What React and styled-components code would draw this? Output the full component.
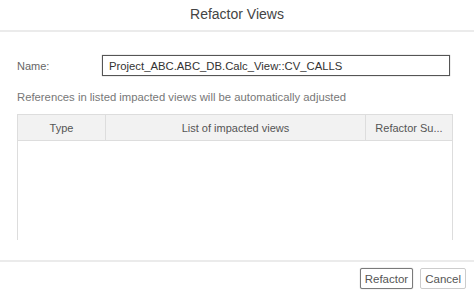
import React from "react"
import styled, { createGlobalStyle } from "styled-components"

const GlobalStyle = createGlobalStyle`
  html, body {
    margin: 0;
    padding: 0;
    background: #ffffff;
    font-family: "Liberation Sans", Arial, sans-serif;
  }
  * {
    box-sizing: border-box;
  }
`

const Dialog = styled.div`
  display: flex;
  flex-direction: column;
  width: 474px;
  height: 293px;
  background: #ffffff;
  overflow: hidden;
`

const Header = styled.div`
  height: 32px;
  display: flex;
  align-items: center;
  justify-content: center;
  border-bottom: 2px solid #ebebeb;
  color: #444444;
  font-size: 14px;
  padding-bottom: 2px;
`

const Content = styled.div`
  flex: 1;
  padding: 23px 21px 0 17px;
  display: flex;
  flex-direction: column;
`

const NameRow = styled.div`
  display: flex;
  align-items: center;
  padding-right: 3px;
`

const Label = styled.div`
  width: 85px;
  color: #666666;
  font-size: 11px;
`

const Input = styled.div`
  flex: 1;
  height: 21px;
  border: 1px solid #555555;
  box-shadow: 0 0 1px #999999;
  padding: 0 6px;
  display: flex;
  align-items: center;
  color: #333333;
  font-size: 11.3px;
`

const Hint = styled.div`
  margin-top: 14px;
  color: #777777;
  font-size: 11.3px;
  line-height: 14px;
`

const Table = styled.div`
  margin-top: 10px;
  height: 126px;
  border: 1px solid #dddddd;
  border-bottom: none;
  display: flex;
  flex-direction: column;
`

const HeadRow = styled.div`
  display: grid;
  grid-template-columns: 87px 260px 1fr;
  height: 26px;
  background: #f2f2f2;
  border-bottom: 1px solid #dddddd;
`

const HeadCell = styled.div`
  display: flex;
  align-items: center;
  justify-content: center;
  color: #555555;
  font-size: 11px;
  white-space: nowrap;
  overflow: hidden;
  border-left: ${(p) => (p.$first ? "none" : "1px solid #dddddd")};
`

const Footer = styled.div`
  height: 33px;
  border-top: 2px solid #ebebeb;
  display: flex;
  align-items: center;
  justify-content: flex-end;
  gap: 7px;
  padding: 2px 8px 0 0;
`

const Button = styled.button`
  height: 21px;
  padding: 0 4px;
  background: #ffffff;
  border: 1px solid ${(p) => (p.$focused ? "#7a7a7a" : "#cccccc")};
  box-shadow: ${(p) => (p.$focused ? "0 0 1px #888888" : "none")};
  border-radius: 2px;
  color: #555555;
  font-family: "Liberation Sans", Arial, sans-serif;
  font-size: 11.5px;
`

const App = () => {
  return (
    <Dialog>
      <GlobalStyle />
      <Header>Refactor Views</Header>
      <Content>
        <NameRow>
          <Label>Name:</Label>
          <Input>Project_ABC.ABC_DB.Calc_View::CV_CALLS</Input>
        </NameRow>
        <Hint>References in listed impacted views will be automatically adjusted</Hint>
        <Table>
          <HeadRow>
            <HeadCell $first>Type</HeadCell>
            <HeadCell>List of impacted views</HeadCell>
            <HeadCell>Refactor Su...</HeadCell>
          </HeadRow>
        </Table>
      </Content>
      <Footer>
        <Button $focused>Refactor</Button>
        <Button>Cancel</Button>
      </Footer>
    </Dialog>
  )
}

export default App
